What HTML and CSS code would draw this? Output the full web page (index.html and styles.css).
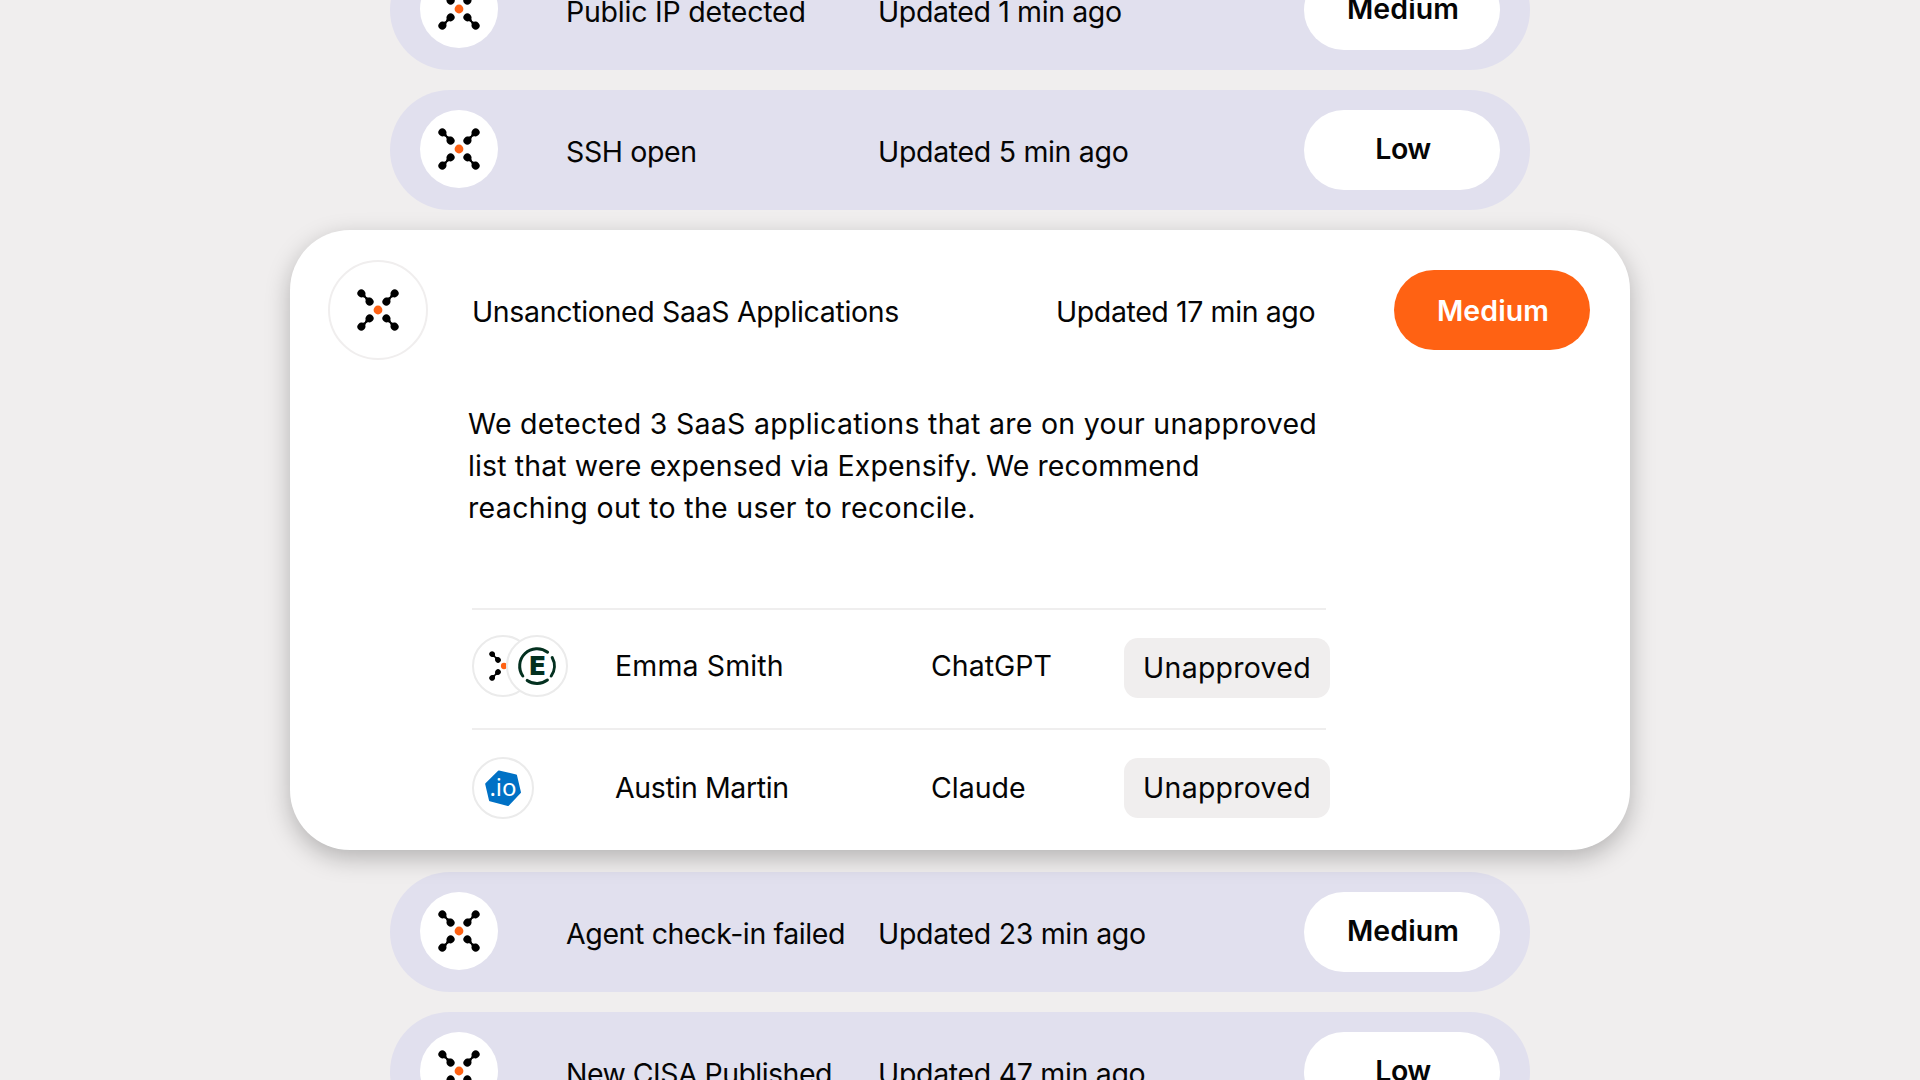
FILE: index.html
```html
<!DOCTYPE html>
<html lang="en">
<head>
<meta charset="utf-8">
<title>Security findings</title>
<link rel="stylesheet" href="styles.css">
</head>
<body>
<svg class="sprite" width="0" height="0" aria-hidden="true">
  <defs>
    <g id="arm">
      <circle cx="23.6" cy="0" r="3.9"/>
      <circle cx="11.8" cy="0" r="3.9"/>
      <path d="M21.5-3.2Q19-1 17.7-.9Q16.4-1 14-3.1V3.1Q16.4 1 17.7.9Q19 1 21.5 3.2Z"/>
    </g>
    <symbol id="hub" viewBox="-21 -21 42 42">
      <use href="#arm" transform="rotate(45)"/>
      <use href="#arm" transform="rotate(135)"/>
      <use href="#arm" transform="rotate(225)"/>
      <use href="#arm" transform="rotate(315)"/>
      <circle r="4.4" fill="#ff6213"/>
    </symbol>
  </defs>
</svg>
<main class="feed">
  <article class="row">
    <span class="logo"><svg class="hub"><use href="#hub"/></svg></span>
    <h2 class="row-title loose">Public IP detected</h2>
    <p class="row-time tight">Updated 1 min ago</p>
    <span class="severity">Medium</span>
  </article>
  <article class="row">
    <span class="logo"><svg class="hub"><use href="#hub"/></svg></span>
    <h2 class="row-title">SSH open</h2>
    <p class="row-time">Updated 5 min ago</p>
    <span class="severity low">Low</span>
  </article>
  <section class="card">
    <header class="card-head">
      <span class="logo logo-large"><svg class="hub"><use href="#hub"/></svg></span>
      <h1 class="card-title">Unsanctioned SaaS Applications</h1>
      <p class="card-time">Updated 17 min ago</p>
      <span class="severity active">Medium</span>
    </header>
    <p class="summary"><span class="line">We detected 3 SaaS applications that are on your unapproved</span> <span class="line line-mid">list that were expensed via Expensify. We recommend</span> <span class="line line-end">reaching out to the user to reconcile.</span></p>
    <ul class="users">
      <li class="user">
        <span class="badges raised">
          <span class="badge"><svg class="hub"><use href="#hub"/></svg></span>
          <span class="badge">
            <svg class="mark" viewBox="-20 -20 40 40">
              <g fill="none" stroke="#03301f" stroke-width="3" stroke-linecap="round">
                <path d="M-14.2 10A17.4 17.4 0 0 1 10.6-13.8"/>
                <path d="M15.2-8.5A17.4 17.4 0 0 1 14.2 10"/>
                <path d="M-9.8 14.4A17.4 17.4 0 0 0 10.4 14"/>
              </g>
              <text class="mark-e" x="0.4" y="9.4" text-anchor="middle">E</text>
            </svg>
          </span>
        </span>
        <span class="user-name emma raised">Emma Smith</span>
        <span class="user-app raised">ChatGPT</span>
        <span class="status">Unapproved</span>
      </li>
      <li class="user">
        <span class="badges">
          <span class="badge">
            <svg class="mark" viewBox="-20 -20 40 40">
              <path d="M-4.2-16.5 13-12.6 17 4.4 5 17-13 12.3-16.8-4Z" fill="#0071c5" stroke="#0071c5" stroke-width="2" stroke-linejoin="round"/>
              <text class="mark-io" x="0" y="7.6" text-anchor="middle">.io</text>
            </svg>
          </span>
        </span>
        <span class="user-name">Austin Martin</span>
        <span class="user-app">Claude</span>
        <span class="status">Unapproved</span>
      </li>
    </ul>
  </section>
  <article class="row">
    <span class="logo"><svg class="hub"><use href="#hub"/></svg></span>
    <h2 class="row-title">Agent check-in failed</h2>
    <p class="row-time">Updated 23 min ago</p>
    <span class="severity">Medium</span>
  </article>
  <article class="row">
    <span class="logo"><svg class="hub"><use href="#hub"/></svg></span>
    <h2 class="row-title tighter">New CISA Published</h2>
    <p class="row-time">Updated 47 min ago</p>
    <span class="severity low">Low</span>
  </article>
</main>
</body>
</html>
```

FILE: styles.css
```css
* {
  box-sizing: border-box;
}

body {
  margin: 0;
  height: 1080px;
  overflow: hidden;
  background: #f0eeee;
  color: #050505;
  font: 400 28.5px/36px "Inter", sans-serif;
  white-space: nowrap;
}

h1, h2, p, ul {
  margin: 0;
  padding: 0;
  font: inherit;
  list-style: none;
}

.sprite {
  display: block;
}

.feed {
  display: flex;
  flex-direction: column;
  align-items: center;
  gap: 20px;
  margin-top: -50px;
}

.row {
  display: grid;
  grid-template-columns: 146px 312px 1fr 196px;
  align-items: center;
  flex: none;
  width: 1140px;
  height: 120px;
  padding: 0 30px;
  border-radius: 60px;
  background: #e1e0ee;
}

.logo {
  display: flex;
  align-items: center;
  justify-content: center;
  width: 78px;
  height: 78px;
  margin-bottom: 2px;
  border-radius: 50%;
  background: #fff;
}

.hub {
  display: block;
  width: 42px;
  height: 42px;
}

.row-title,
.row-time {
  padding-top: 3px;
  letter-spacing: -0.38px;
}

.row-time {
  letter-spacing: -0.32px;
}

.row .loose {
  letter-spacing: -0.22px;
}

.row .tight {
  letter-spacing: -0.38px;
}

.row .tighter {
  letter-spacing: -0.54px;
}

.severity {
  width: 196px;
  height: 80px;
  padding: 0 0 2px 2px;
  border-radius: 40px;
  background: #fff;
  font-weight: 600;
  line-height: 78px;
  letter-spacing: 0.1px;
  text-align: center;
}

.low {
  letter-spacing: -0.5px;
}

.card {
  position: relative;
  flex: none;
  width: 1340px;
  height: 620px;
  margin-bottom: 2px;
  padding: 30px 40px 0 38px;
  border-radius: 60px;
  background: #fff;
  box-shadow: 0 8px 24px rgba(0, 0, 0, 0.25);
}

.card-head {
  display: grid;
  grid-template-columns: 144px 584px 1fr 196px;
  height: 100px;
}

.logo-large {
  width: 100px;
  height: 100px;
  margin: 0;
  border: 2px solid #f0eeee;
}

.card-title,
.card-time {
  padding-top: 34px;
  letter-spacing: -0.34px;
}

.card-time {
  letter-spacing: -0.4px;
}

.active {
  margin-top: 10px;
  padding: 0 0 0 2px;
  background: #ff6213;
  color: #fff;
  line-height: 82px;
}

.summary {
  margin: 43px 0 0 140px;
  line-height: 42px;
  letter-spacing: 0.28px;
}

.line {
  display: block;
}

.line-mid {
  letter-spacing: 0.11px;
}

.line-end {
  letter-spacing: 0.33px;
}

.users {
  width: 858px;
  margin: 79px 0 0 144px;
}

.user {
  display: grid;
  grid-template-columns: 143px 316px 193px 206px;
  align-items: center;
  height: 120px;
  background: linear-gradient(#efeeee, #efeeee) 0 0 / 854px 2px no-repeat;
}

.badges {
  display: flex;
}

.badge {
  display: flex;
  align-items: center;
  justify-content: center;
  width: 62px;
  height: 62px;
  border: 2px solid #ebebeb;
  border-radius: 50%;
  background: #fff;
}

.raised {
  margin-bottom: 4px;
}

.badge + .badge {
  margin-left: -28px;
}

.badge .hub {
  width: 30px;
  height: 30px;
  margin-left: 2px;
}

.mark {
  width: 40px;
  height: 40px;
}

.mark-e {
  fill: #03301f;
  font-size: 26px;
  font-weight: 900;
}

.mark-io {
  fill: #fff;
  font: 400 24px "Noto Sans", sans-serif;
}

.user-name {
  letter-spacing: -0.38px;
}

.emma {
  letter-spacing: 0.14px;
}

.user-app {
  letter-spacing: 0;
}

.status {
  width: 206px;
  height: 60px;
  border-radius: 14px;
  background: #f0eeee;
  line-height: 60px;
  letter-spacing: 0.25px;
  text-align: center;
}
```
